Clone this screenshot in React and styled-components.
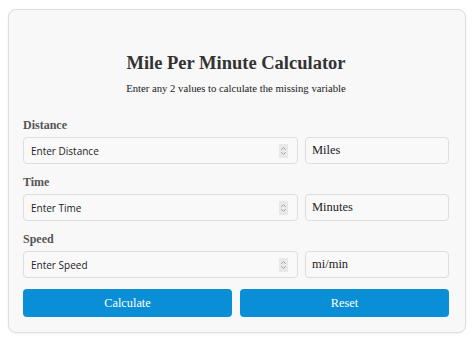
import React from "react";
import styled, { createGlobalStyle } from "styled-components";

const Global = createGlobalStyle`
  html, body { margin: 0; padding: 0; background: #ffffff; }
  body { font-family: "Liberation Serif", "Times New Roman", serif; }
`;

const Page = styled.div`
  padding: 9px 8px 8px 8px;
`;

const Card = styled.div`
  background: #f8f8f8;
  border: 1px solid #dddddd;
  border-radius: 8px;
  padding: 42px 16px 15px 14px;
  box-shadow: 0 1px 3px rgba(0, 0, 0, 0.06);
`;

const Title = styled.h2`
  margin: 0;
  text-align: center;
  font-size: 18.5px;
  line-height: 22px;
  font-weight: bold;
  color: #333333;
`;

const Subtitle = styled.p`
  margin: 7px 0 23px 0;
  text-align: center;
  font-size: 10.7px;
  line-height: 14px;
  color: #222222;
`;

const Group = styled.div`
  display: flex;
  flex-direction: column;
  gap: 5px;
  margin-bottom: 11px;
`;

const Label = styled.label`
  font-size: 12px;
  line-height: 14px;
  font-weight: bold;
  color: #555555;
`;

const Row = styled.div`
  display: grid;
  grid-template-columns: 1fr 144px;
  gap: 7px;
`;

const Field = styled.div`
  box-sizing: border-box;
  height: 27px;
  display: flex;
  align-items: center;
  justify-content: space-between;
  padding: 0 9px 0 7px;
  background: #f9f9f9;
  border: 1px solid #dedede;
  border-radius: 4px;
`;

const Placeholder = styled.span`
  font-family: "Open Sans", "DejaVu Sans", sans-serif;
  font-size: 10px;
  color: #222222;
`;

const Spinner = styled.span`
  width: 9px;
  height: 14px;
  background: #e9e9e9;
  display: flex;
  align-items: center;
  justify-content: center;
`;

const Unit = styled.div`
  box-sizing: border-box;
  height: 27px;
  display: flex;
  align-items: center;
  padding: 0 6px;
  background: #f9f9f9;
  border: 1px solid #dedede;
  border-radius: 4px;
  font-size: 12.5px;
  color: #222222;
`;

const Buttons = styled.div`
  display: grid;
  grid-template-columns: 1fr 1fr;
  gap: 8px;
`;

const Button = styled.button`
  height: 28px;
  border: none;
  border-radius: 4px;
  background: #0a8fd6;
  color: #ffffff;
  font-family: "Liberation Serif", "Times New Roman", serif;
  font-size: 12.3px;
  padding: 0;
  cursor: pointer;
`;

const SpinIcon = () => (
  <svg width="7" height="10" viewBox="0 0 7 10" fill="none">
    <path d="M1.3 3.8 L3.5 1.6 L5.7 3.8" stroke="#9a9a9a" strokeWidth="0.9" />
    <path d="M1.3 6.2 L3.5 8.4 L5.7 6.2" stroke="#9a9a9a" strokeWidth="0.9" />
  </svg>
);

const fields = [
  { label: "Distance", placeholder: "Enter Distance", unit: "Miles" },
  { label: "Time", placeholder: "Enter Time", unit: "Minutes" },
  { label: "Speed", placeholder: "Enter Speed", unit: "mi/min" },
];

export default function App() {
  return (
    <>
      <Global />
      <Page>
        <Card>
          <Title>Mile Per Minute Calculator</Title>
          <Subtitle>Enter any 2 values to calculate the missing variable</Subtitle>
          {fields.map((f) => (
            <Group key={f.label}>
              <Label>{f.label}</Label>
              <Row>
                <Field>
                  <Placeholder>{f.placeholder}</Placeholder>
                  <Spinner>
                    <SpinIcon />
                  </Spinner>
                </Field>
                <Unit>{f.unit}</Unit>
              </Row>
            </Group>
          ))}
          <Buttons>
            <Button>Calculate</Button>
            <Button>Reset</Button>
          </Buttons>
        </Card>
      </Page>
    </>
  );
}
